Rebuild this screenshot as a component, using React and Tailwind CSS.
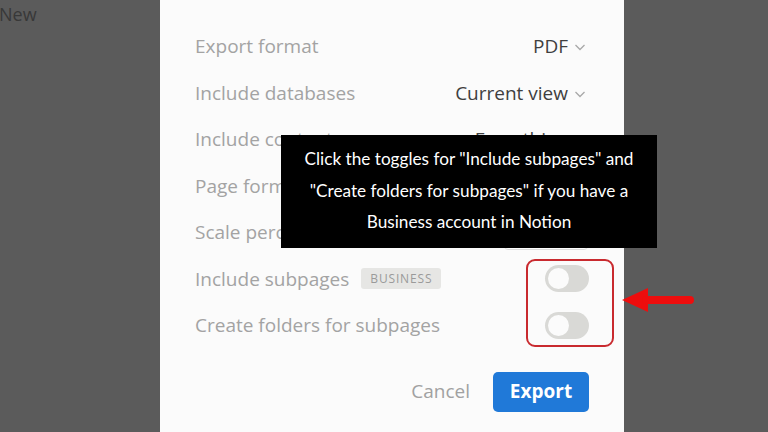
import React from 'react';

// Notion export dialog with a tutorial tooltip on top
const rows = [
  { label: 'Export format', value: 'PDF' },
  { label: 'Include databases', value: 'Current view' },
  { label: 'Include content', value: 'Everything' },
  { label: 'Page format', value: 'Letter' },
];

const Chevron = () => (
  <svg width="14" height="12" viewBox="0 0 14 12" className="ml-[5px] mt-[2px]">
    <path d="M2.5 4 L7 8.5 L11.5 4" fill="none" stroke="#a8a8a8" strokeWidth="1.3" />
  </svg>
);

const Toggle = () => (
  <div className="w-[44px] h-[27px] rounded-full bg-[#d9d9d6] flex items-center px-[3px]">
    <div className="w-[21px] h-[21px] rounded-full bg-[#fbfbfb]" />
  </div>
);

export default function App() {
  return (
    <div className="relative w-[768px] h-[432px] overflow-hidden flex bg-[#5b5b5b] font-['Open_Sans',sans-serif]">
      {/* page behind the modal */}
      <div className="w-[160px] shrink-0">
        <div className="text-[18px] text-[#383838] leading-none pt-[5px] -ml-[1px]">New</div>
      </div>

      {/* modal */}
      <div className="w-[464px] shrink-0 bg-[#fbfbfb] pl-[35px] pr-[37px] pt-[23px]">
        {rows.map((r) => (
          <div key={r.label} className="h-[46.5px] flex items-center justify-between">
            <span className="text-[19px] text-[#a3a3a3]">{r.label}</span>
            <span className="flex items-center text-[19px] text-[#3f3f3f]">
              {r.value}
              <Chevron />
            </span>
          </div>
        ))}

        <div className="h-[46.5px] flex items-center justify-between">
          <span className="text-[19px] text-[#a3a3a3]">Scale percent</span>
          <div className="w-[84px] h-[30px] rounded-[4px] border border-[#dedede] bg-white -mr-[1px] mt-[5px]" />
        </div>

        {/* toggles highlighted by a red frame */}
        <div className="relative">
          <div className="h-[46.5px] flex items-center justify-between">
            <span className="flex items-center gap-[12px]">
              <span className="text-[19px] text-[#a3a3a3]">Include subpages</span>
              <span className="h-[21px] px-[9px] rounded-[3px] bg-[#e6e6e4] text-[12px] tracking-[0.07em] text-[#9a9a9a] flex items-center">
                BUSINESS
              </span>
            </span>
            <span className="-mr-[2px]"><Toggle /></span>
          </div>
          <div className="h-[46.5px] flex items-center justify-between">
            <span className="text-[19px] text-[#a3a3a3]">Create folders for subpages</span>
            <span className="-mr-[2px]"><Toggle /></span>
          </div>
          <div className="absolute left-[331px] top-[3px] w-[88px] h-[88px] rounded-[9px] border-2 border-[#c92a2f]" />
        </div>

        <div className="flex items-center justify-end gap-[23px] mt-[23px] -mr-[2px]">
          <span className="text-[19px] text-[#a1a1a1]">Cancel</span>
          <button className="w-[96px] h-[40px] rounded-[5px] bg-[#2079d8] text-white text-[19px] font-bold">
            Export
          </button>
        </div>
      </div>

      {/* tooltip */}
      <div className="absolute left-[281px] top-[135px] w-[376px] h-[113px] bg-black text-white text-center text-[17.2px] leading-[31.5px] pt-[8px] font-['Lato',sans-serif]">
        <p>Click the toggles for "Include subpages" and</p>
        <p>"Create folders for subpages" if you have a</p>
        <p>Business account in Notion</p>
      </div>

      {/* arrow */}
      <svg className="absolute left-[620px] top-[286px]" width="76" height="30" viewBox="0 0 76 30">
        <polygon points="2,14 28,2 28,26" fill="#ee0d0d" />
        <line x1="26" y1="14" x2="70" y2="14" stroke="#ee0d0d" strokeWidth="8" strokeLinecap="round" />
      </svg>
    </div>
  );
}
